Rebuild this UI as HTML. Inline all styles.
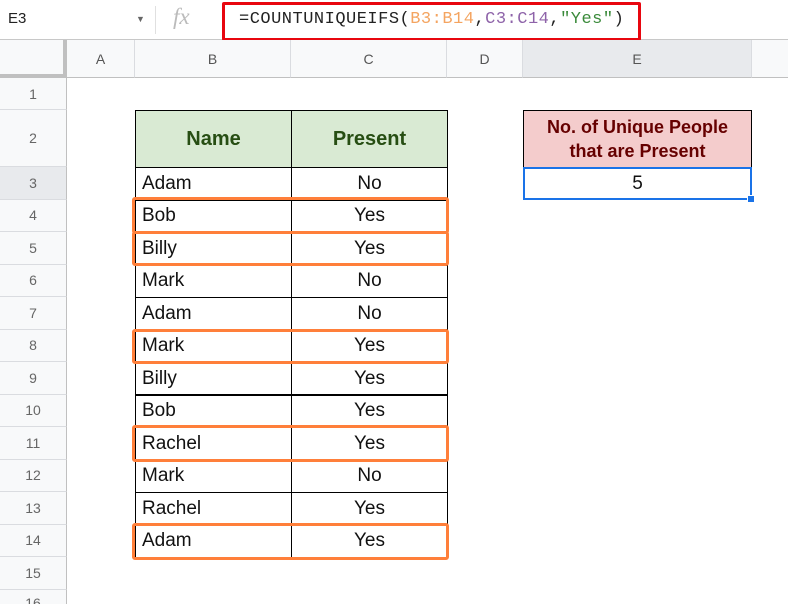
<!DOCTYPE html>
<html><head><style>
html,body{margin:0;width:788px;height:604px;overflow:hidden}
body{background:#fff;font-family:"Liberation Sans",Arial,sans-serif;position:relative}
div{position:absolute;box-sizing:border-box}
.rh{left:0;width:67px;background:#f8f9fa;border-bottom:1px solid #dadce0;border-right:1px solid #c0c0c0;color:#666;font-size:14px;display:flex;align-items:center;justify-content:center}
.ch{top:40px;height:38px;background:#f8f9fa;border-right:1px solid #dadce0;border-bottom:1px solid #c0c0c0;color:#555;font-size:14px;display:flex;align-items:center;justify-content:center}
.c{height:33px;border:1px solid #000;font-size:19px;color:#111;display:flex;align-items:center}
.n{left:135px;width:157px;padding-left:6px}
.p{left:291px;width:157px;justify-content:center}
.o{left:132px;width:317px;height:37px;border:3px solid #ff7f3a;border-radius:3px}
</style></head><body>
<div style="left:0;top:0;width:788px;height:40px;background:#fff;border-bottom:1px solid #c8c8c8"></div>
<div style="left:8px;top:10px;font-size:15px;color:#222">E3</div>
<div style="left:136px;top:14px;font-size:9px;color:#666">▼</div>
<div style="left:155px;top:6px;width:1px;height:28px;background:#e0e0e0"></div>
<div style="left:173px;top:4px;font-family:'Liberation Serif',serif;font-style:italic;font-size:23px;color:#bbb">fx</div>
<div style="left:222px;top:2px;width:419px;height:39px;border:3px solid #e8060f;border-radius:2px;background:#fff"></div>
<div style="left:239px;top:10px;font-family:'Liberation Mono',monospace;font-size:17px;letter-spacing:0.5px;color:#222">=COUNTUNIQUEIFS(<span style="color:#f4a460">B3:B14</span>,<span style="color:#8e63a9">C3:C14</span>,<span style="color:#3a8a3a">"Yes"</span>)</div>
<div style="left:0;top:40px;width:67px;height:38px;background:#f8f9fa;border-right:4px solid #c0c0c0;border-bottom:4px solid #c0c0c0"></div>
<div class="ch" style="left:67px;width:68px">A</div>
<div class="ch" style="left:135px;width:156px">B</div>
<div class="ch" style="left:291px;width:156px">C</div>
<div class="ch" style="left:447px;width:76px">D</div>
<div class="ch" style="left:523px;width:229px;background:#e8eaed">E</div>
<div class="ch" style="left:752px;width:40px"></div>
<div class="rh" style="top:78px;height:32px">1</div>
<div class="rh" style="top:110px;height:57px">2</div>
<div class="rh" style="top:167px;height:32.5px;background:#e8eaed">3</div>
<div class="rh" style="top:199.5px;height:32.5px">4</div>
<div class="rh" style="top:232px;height:32.5px">5</div>
<div class="rh" style="top:264.5px;height:32.5px">6</div>
<div class="rh" style="top:297px;height:32.5px">7</div>
<div class="rh" style="top:329.5px;height:32.5px">8</div>
<div class="rh" style="top:362px;height:32.5px">9</div>
<div class="rh" style="top:394.5px;height:32.5px">10</div>
<div class="rh" style="top:427px;height:32.5px">11</div>
<div class="rh" style="top:459.5px;height:32.5px">12</div>
<div class="rh" style="top:492px;height:32.5px">13</div>
<div class="rh" style="top:524.5px;height:32.5px">14</div>
<div class="rh" style="top:557px;height:32.5px">15</div>
<div class="rh" style="top:589.5px;height:15px;align-items:flex-start;padding-top:5px;border-bottom:none">16</div>

<div class="c" style="left:135px;top:110px;width:157px;height:58px;background:#d9ead3;justify-content:center;font-weight:bold;color:#274e13;font-size:20px">Name</div>
<div class="c" style="left:291px;top:110px;width:157px;height:58px;background:#d9ead3;justify-content:center;font-weight:bold;color:#274e13;font-size:20px">Present</div>

<div class="c n" style="top:167px">Adam</div><div class="c p" style="top:167px">No</div>
<div class="c n" style="top:199.5px">Bob</div><div class="c p" style="top:199.5px">Yes</div>
<div class="c n" style="top:232px">Billy</div><div class="c p" style="top:232px">Yes</div>
<div class="c n" style="top:264.5px">Mark</div><div class="c p" style="top:264.5px">No</div>
<div class="c n" style="top:297px">Adam</div><div class="c p" style="top:297px">No</div>
<div class="c n" style="top:329.5px">Mark</div><div class="c p" style="top:329.5px">Yes</div>
<div class="c n" style="top:362px">Billy</div><div class="c p" style="top:362px">Yes</div>
<div class="c n" style="top:394.5px">Bob</div><div class="c p" style="top:394.5px">Yes</div>
<div class="c n" style="top:427px">Rachel</div><div class="c p" style="top:427px">Yes</div>
<div class="c n" style="top:459.5px">Mark</div><div class="c p" style="top:459.5px">No</div>
<div class="c n" style="top:492px">Rachel</div><div class="c p" style="top:492px">Yes</div>
<div class="c n" style="top:524.5px">Adam</div><div class="c p" style="top:524.5px">Yes</div>

<div class="o" style="top:197px"></div>
<div class="o" style="top:231px;height:35px"></div>
<div class="o" style="top:329px;height:35px"></div>
<div class="o" style="top:425px;height:37px"></div>
<div class="o" style="top:523px;height:37px"></div>

<div class="c" style="left:523px;top:110px;width:229px;height:58px;background:#f4cccc;justify-content:center;text-align:center;font-weight:bold;color:#660000;font-size:18px;line-height:24px">No. of Unique People<br>that are Present</div>
<div style="left:523px;top:167px;width:229px;height:33px;border:2px solid #1a73e8;font-size:19px;display:flex;align-items:center;justify-content:center;color:#111">5</div>
<div style="left:747px;top:195px;width:8px;height:8px;background:#1a73e8;border:1px solid #fff"></div>
</body></html>
